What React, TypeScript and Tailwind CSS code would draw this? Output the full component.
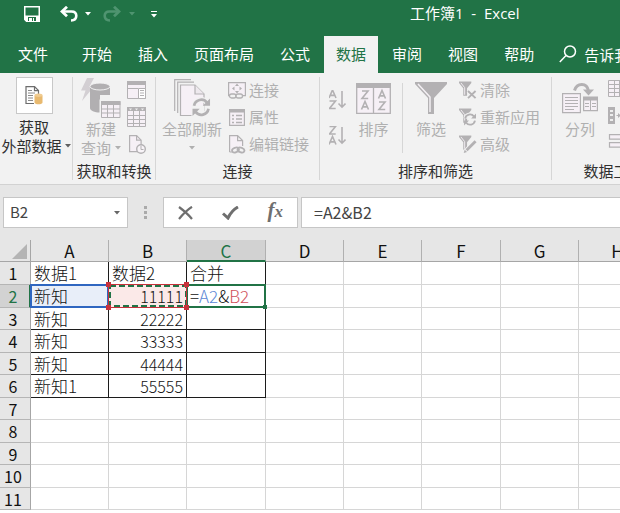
import React from 'react';

type IconProps = { className?: string };

const G = '#b3b1b3';
const PALE = '#f6f0f6';

function SaveIcon() {
  return (
    <svg width="16" height="16" viewBox="0 0 16 16" fill="none" aria-hidden="true">
      <path d="M.75.75h14.5v14.5H2.5L.75 13.5z" stroke="#fff" strokeWidth="1.5" />
      <path d="M1 9.500h14V15H1z" fill="#fff" />
      <path d="M4 11h8v4H4z" fill="#217346" />
      <path d="M5 12h3v3H5zM9 12h1v3H9z" fill="#fff" />
    </svg>
  );
}

function UndoIcon({ className }: IconProps) {
  return (
    <svg width="18" height="16" viewBox="0 0 18 16" fill="none" className={className} aria-hidden="true">
      <path d="M2 5.500h9.500c3 0 4.800 1.800 4.800 4.300s-1.800 4.600-5.300 4.700" stroke="currentColor" strokeWidth="2.600" />
      <path d="M7 .8 2 5.500l5 4.700" stroke="currentColor" strokeWidth="2.800" />
    </svg>
  );
}

function Caret({ className = '' }: IconProps) {
  return (
    <svg width="6" height="4" viewBox="0 0 6 4" className={className} aria-hidden="true">
      <path d="M0 0h6L3 3.500z" fill="currentColor" />
    </svg>
  );
}

function SearchIcon() {
  return (
    <svg width="18" height="18" viewBox="0 0 18 18" fill="none" stroke="#fff" strokeWidth="1.500" aria-hidden="true">
      <circle cx="11" cy="6.500" r="5.500" />
      <path d="M7 10.500.8 17" />
    </svg>
  );
}

function ExternalDataIcon() {
  return (
    <svg width="18" height="19" viewBox="0 0 18 19" fill="none" aria-hidden="true">
      <path d="M9 17.500H1V.6h8.500l4 4V8" stroke="#6d6d6d" strokeWidth="1.200" />
      <path d="M9.500.6v4h4" stroke="#6d6d6d" strokeWidth="1.200" />
      <path d="M3 4.500h4M3 7h7M3 9.500h5M3 12h5M3 14.500h5" stroke="#8a8a8a" />
      <path d="M9.500 9.500v7c0 1 1.800 1.800 4 1.800s4-.8 4-1.800v-7z" fill="#e8b96f" />
      <ellipse cx="13.500" cy="9.300" rx="4" ry="1.700" fill="#f0cb90" />
    </svg>
  );
}

function NewQueryIcon() {
  return (
    <svg width="40" height="40" viewBox="0 0 40 40" fill="none" aria-hidden="true">
      <path d="M6 0h7L8.500 8.500H13L1 23l3.500-10.500H0z" fill="#d3cfd3" />
      <path d="M9 8v22c0 2.600 4.400 4.500 10 4.500V17h10V8z" fill="#b1afb1" />
      <ellipse cx="19" cy="8.500" rx="10" ry="3.500" fill="#b1afb1" stroke="#f2f2f2" />
      <path d="M18.500 21.500h21v18.500h-21z" fill="#f2f2f2" />
      <path d="M20.500 23.500h18.500v16H20.500z" fill={PALE} stroke={G} />
      <path d="M20 23h19.500v4H20z" fill={G} />
      <path d="M20.500 31h18.500M20.500 35h18.500M26.500 27v12M32.500 27v12" stroke={G} />
    </svg>
  );
}

function ShowQueriesIcon() {
  return (
    <svg width="19" height="18" viewBox="0 0 19 18" fill="none" aria-hidden="true">
      <path d="M.5.5h18v17H.5z" fill={PALE} stroke={G} />
      <path d="M0 0h19v4H0z" fill={G} />
      <path d="M11.500 7.500h7v10h-7z" fill="#fff" stroke={G} />
      <path d="M13 9.500h4M13 12h4M13 14.500h4M1 7.500h10" stroke={G} />
    </svg>
  );
}

function FromTableIcon() {
  return (
    <svg width="19" height="20" viewBox="0 0 19 20" fill="none" aria-hidden="true">
      <path d="M.5.5h18v19H.5z" fill={PALE} stroke={G} />
      <path d="M0 0h19v4H0z" fill={G} />
      <path d="M1 8.500h17M1 12.500h17M1 16.500h17M6.500 4v15M12.500 4v15" stroke={G} />
      <path d="M2 1.500h3L3.500 3.500zM8 1.500h3L9.500 3.500zM14 1.500h3l-1.500 2z" fill="#eee" />
    </svg>
  );
}

function RecentIcon() {
  return (
    <svg width="19" height="20" viewBox="0 0 19 20" fill="none" aria-hidden="true">
      <path d="M2.600 .7h7l4.500 4.500v11.500H2.600z" fill={PALE} stroke={G} strokeWidth="1.200" />
      <path d="M9.600 .7v4.500h4.500" stroke={G} strokeWidth="1.200" />
      <circle cx="14" cy="14" r="4.300" fill="#f8f4f8" stroke={G} strokeWidth="1.400" />
      <path d="M14 11v3.500h2.500" stroke={G} />
    </svg>
  );
}

function RefreshArrows({ x, y, s }: { x: number; y: number; s: number }) {
  return (
    <g transform={`translate(${x} ${y}) scale(${s})`} fill="none">
      <path d="M2 7.500a7 7 0 0 1 12.500-3M16 10.500a7 7 0 0 1-12.500 3" stroke="#f2f2f2" strokeWidth="5" />
      <path d="M2 7.500a7 7 0 0 1 12.500-3M16 10.500a7 7 0 0 1-12.500 3" stroke={G} strokeWidth="2.600" />
      <path d="M17.500.5v7h-7zM.5 17.500v-7h7z" fill={G} />
    </g>
  );
}

function RefreshAllIcon() {
  return (
    <svg width="37" height="38" viewBox="0 0 37 38" fill="none" aria-hidden="true">
      <path d="M.7 32V.7H17M3.700 34V3.200H20" stroke={G} strokeWidth="1.200" />
      <path d="M6.500 36.500V6H21l9 9v21.500z" fill={PALE} stroke={G} strokeWidth="1.200" />
      <path d="M21 6v9h9" fill="#eee9ee" stroke={G} strokeWidth="1.200" />
      <path d="M17.500 26.500h13v12h-13z" fill="#f2f2f2" />
      <RefreshArrows x={18} y={19} s={1.030} />
    </svg>
  );
}

function ConnectionsIcon() {
  return (
    <svg width="18" height="17" viewBox="0 0 18 17" fill="none" aria-hidden="true">
      <path d="M.6.600h16.800v13H.6z" fill={PALE} stroke={G} strokeWidth="1.200" />
      <path d="M9 1.500l2 2.500H7zM9 11.500l2-2.500H7zM4 6.500l2.500-2v4zM14 6.500l-2.500-2v4z" fill={G} />
      <rect x="1.500" y="12" width="6.500" height="4" rx="2" fill="#f2f2f2" stroke={G} strokeWidth="1.300" />
      <rect x="8" y="12" width="6.500" height="4" rx="2" fill="#f2f2f2" stroke={G} strokeWidth="1.300" />
    </svg>
  );
}

function PropertiesIcon() {
  return (
    <svg width="16" height="17" viewBox="0 0 16 17" fill="none" aria-hidden="true">
      <path d="M.6.600h14.800v15.800H.6z" fill={PALE} stroke={G} strokeWidth="1.200" />
      <path d="M0 0h16v3.500H0z" fill={G} />
      <path d="M3 6.500h2M3 10h2M3 13.500h2M7 6.500h6M7 10h6M7 13.500h6" stroke={G} strokeWidth="1.300" />
    </svg>
  );
}

function EditLinksIcon() {
  return (
    <svg width="18" height="19" viewBox="0 0 18 19" fill="none" aria-hidden="true">
      <path d="M1.600 17V.6h8l5 5V11M9.600.6v5h5M1.600 17H4" fill={PALE} stroke={G} strokeWidth="1.200" />
      <ellipse cx="7.500" cy="15" rx="3.500" ry="2.300" transform="rotate(-20 7.500 15)" stroke={G} strokeWidth="1.800" />
      <ellipse cx="13" cy="15" rx="3.500" ry="2.300" transform="rotate(20 13 15)" stroke={G} strokeWidth="1.800" />
    </svg>
  );
}

const A = (x: number, y: number) => <path d={`M${x} ${y + 8}l3.500-8 3.500 8M${x + 1.2} ${y + 5.4}h4.600`} />;
const Z = (x: number, y: number) => <path d={`M${x + .5} ${y + .5}h6l-6 7.500h6.200`} />;

function SortIcon({ down }: { down?: boolean }) {
  return (
    <svg width="17" height="20" viewBox="0 0 17 20" fill="none" stroke={G} strokeWidth="1.600" aria-hidden="true">
      {down ? Z(0, 0) : A(0, 0)}
      {down ? A(0, 10.500) : Z(0, 10.500)}
      <path d="M13 1v16M9.500 13.500l3.500 3.700 3.500-3.700" />
    </svg>
  );
}

function SortDialogIcon() {
  return (
    <svg width="35" height="31" viewBox="0 0 35 31" fill="none" stroke={G} strokeWidth="1.600" aria-hidden="true">
      <path d="M.7.7h33.600v29.600H.7zM17.500 4v26" fill={PALE} strokeWidth="1.300" />
      <path d="M0 0h35v5H0z" fill={G} stroke="none" />
      {Z(5.500, 7.500)}
      {A(5.500, 18.500)}
      {A(22.500, 7.500)}
      {Z(22.500, 18.500)}
    </svg>
  );
}

function FunnelIcon() {
  return (
    <svg width="32" height="32" viewBox="0 0 32 32" fill="none" aria-hidden="true">
      <path d="M0 0h32v2L19 16v16h-6V16L0 2z" fill={G} />
      <path d="M3 2l12 13v15" stroke="#f4f0f4" strokeWidth="1.500" />
    </svg>
  );
}

function FilterIcon({ kind }: { kind: 'clear' | 'reapply' | 'advanced' }) {
  return (
    <svg width="19" height="19" viewBox="0 0 19 19" fill="none" aria-hidden="true">
      <path d="M0 0h13v1.500L8.500 7v8h-4V7L0 1.500z" fill={G} />
      <path d="M2 1.500 6 6.500V14" stroke="#f4f0f4" />
      {kind === 'clear' && (
        <>
          <path d="M9.500 10l8 7.500M17.500 10l-8 7.500" stroke="#f2f2f2" strokeWidth="4" />
          <path d="M9.500 10l8 7.500M17.500 10l-8 7.500" stroke={G} strokeWidth="2" />
        </>
      )}
      {kind === 'reapply' && <RefreshArrows x={5} y={5} s={.740} />}
      {kind === 'advanced' && (
        <>
          <path d="M6 17.500 17.500 6" stroke="#f2f2f2" strokeWidth="5" />
          <path d="M8 15.500 17.500 6" stroke={G} strokeWidth="3" />
          <path d="M5 18.500l1-3.500 2.500 2.500z" fill={G} />
        </>
      )}
    </svg>
  );
}

function TextToColumnsIcon() {
  return (
    <svg width="36" height="32" viewBox="0 0 36 32" fill="none" aria-hidden="true">
      <path d="M12.500 8.500C15 .5 25 .5 26.500 9" stroke={G} strokeWidth="3" />
      <path d="M21 7.500h11L26.500 13.500z" fill={G} />
      <path d="M.6 11.600h17.800v19H.6z" fill={PALE} stroke={G} strokeWidth="1.200" />
      <path d="M3 15.500h13M3 18.500h13M3 21.500h13M3 24.500h13M3 27.500h9" stroke={G} />
      <path d="M21.600 15.600h13.800v13H21.600z" fill={PALE} stroke={G} strokeWidth="1.200" />
      <path d="M21 14.500h15v4H21z" fill={G} />
      <path d="M28.500 16v12M23 21.500h4M23 24.500h4M30 21.500h4M30 24.500h4" stroke={G} />
    </svg>
  );
}

function FlashFillIcon() {
  return (
    <svg width="19" height="17" viewBox="0 0 19 17" fill="none" aria-hidden="true">
      <path d="M.5.5h18v16H.5zM.5 4.500h18M.5 8.500h18M.5 12.500h18M6.500.5v16M11.500.5v16" fill={PALE} stroke={G} />
    </svg>
  );
}

function RemoveDuplicatesIcon() {
  return (
    <svg width="19" height="17" viewBox="0 0 19 17" fill="none" aria-hidden="true">
      <path d="M0 0h7v17H0z" fill={G} />
      <path d="M2 3h3v2H2zM2 7h3v2H2zM2 12h3v2H2z" fill="#eee" />
      <path d="M8.500 8.500H14" stroke={G} />
      <path d="M10 6l3 2.500-3 2.500z" fill={G} />
    </svg>
  );
}

function ValidationIcon() {
  return (
    <svg width="19" height="14" viewBox="0 0 19 14" fill="none" aria-hidden="true">
      <path d="M1.500.6h16v4.500h-16zM1.500 8.600h16v4.500h-16z" fill={PALE} stroke={G} strokeWidth="1.200" />
    </svg>
  );
}

function Tab({ label, active = false }: { label: string; active?: boolean }) {
  return (
    <button
      type="button"
      role="tab"
      aria-selected={active}
      className={
        active
          ? 'h-full shrink-0 bg-[#f2f2f2] px-3 pb-[3px] text-[#217346]'
          : 'h-full shrink-0 px-3 pb-[3px] text-white'
      }
    >
      {label}
    </button>
  );
}

function Group({ title, className, children }: { title: string; className: string; children: React.ReactNode }) {
  return (
    <section aria-label={title} className={`flex shrink-0 flex-col border-r border-[#d6d6d6] ${className}`}>
      <div className="flex h-[86px]">{children}</div>
      <h2 className="text-center text-[#303030]">{title}</h2>
    </section>
  );
}

function BigButton({ icon, label, second, caret, className = '' }: {
  icon: React.ReactNode; label: string; second?: string; caret?: boolean; className?: string;
}) {
  return (
    <button type="button" className={`flex shrink-0 flex-col items-center text-[#b0b0b0] ${className}`}>
      <span className="flex h-[42px] items-center">{icon}</span>
      <span>{label}</span>
      {(second || caret) && (
        <span className="flex h-[19px] items-center gap-1">
          {second}
          <Caret />
        </span>
      )}
    </button>
  );
}

function SmallButton({ icon, label }: { icon: React.ReactNode; label: string }) {
  return (
    <button type="button" className="flex h-[27px] items-center gap-[3px] text-[#b0b0b0]">
      <span className="flex w-[18px] justify-center">{icon}</span>
      <span className="pb-[2px]">{label}</span>
    </button>
  );
}

const columns = ['A', 'B', 'C', 'D', 'E', 'F', 'G', 'H'];
const data: string[][] = [
  ['数据1', '数据2', '合并'],
  ['新知', '11111', ''],
  ['新知', '22222', ''],
  ['新知', '33333', ''],
  ['新知', '44444', ''],
  ['新知1', '55555', ''],
  [], [], [], [], [],
];

function Handles() {
  return (
    <>
      <span className="absolute -left-[3px] -top-[3px] size-[5px] bg-[#c8323c]" />
      <span className="absolute -right-[3px] -top-[3px] size-[5px] bg-[#c8323c]" />
      <span className="absolute -bottom-[3px] -left-[3px] size-[5px] bg-[#c8323c]" />
      <span className="absolute -bottom-[3px] -right-[3px] size-[5px] bg-[#c8323c]" />
    </>
  );
}

function Cell({ row, col }: { row: number; col: number }) {
  const value = data[row][col] ?? '';
  const boxed = row < 6 && col < 3;
  const border = boxed ? 'border-[#1c1c1c]' : 'border-[#d6d6d6]';
  const align = col === 1 && row > 0 ? 'pr-[3px] text-right text-[16px]' : 'pl-[3px] text-left';
  return (
    <td className={`relative whitespace-nowrap border-b border-r py-0 leading-5 ${border} ${align}`}>
      {row === 1 && col === 0 && (
        <span className="absolute -inset-px border-2 border-[#2f66c0] bg-[#e8eef9]" />
      )}
      {row === 1 && col === 1 && (
        <span className="absolute -inset-px z-10 border border-[#c8323c] bg-[#fbe9e8]">
          <svg className="absolute inset-0 size-full" aria-hidden="true">
            <rect x="1" y="1" width="76" height="20" fill="none" stroke="#217346" strokeWidth="2" strokeDasharray="6 3" />
          </svg>
          <Handles />
        </span>
      )}
      {row === 1 && col === 2 ? (
        <>
          <span className="absolute -inset-px border-2 border-[#217346] bg-white" />
          <span className="absolute -bottom-[2px] -right-[2px] z-10 size-1 bg-[#217346]" />
          <span className="relative">
            =<span className="text-[#5b87d6]">A2</span>&amp;<span className="text-[#d0505a]">B2</span>
          </span>
        </>
      ) : (
        <span className="relative z-20">{value}</span>
      )}
    </td>
  );
}

export default function App() {
  return (
    <div className="h-screen overflow-hidden bg-white font-['Noto_Sans_CJK_SC',sans-serif] text-[15px] leading-[19px]">
      <header className="bg-[#217346] text-white">
        <div className="flex h-9 items-start">
          <div className="flex w-[410px] shrink-0 items-center pl-6 pt-[6px]">
            <button type="button" aria-label="保存"><SaveIcon /></button>
            <button type="button" aria-label="撤消" className="ml-5 flex items-center gap-[7px]">
              <UndoIcon />
              <Caret />
            </button>
            <button type="button" aria-label="恢复" className="ml-3 flex items-center gap-2 text-[#4f9470]">
              <UndoIcon className="-scale-x-100" />
              <Caret />
            </button>
            <button type="button" aria-label="自定义快速访问工具栏" className="ml-4 flex flex-col items-center gap-[2px]">
              <span className="h-px w-[6px] bg-white" />
              <Caret />
            </button>
          </div>
          <h1 className="shrink-0 whitespace-pre pt-1 font-['Open_Sans','Noto_Sans_CJK_SC',sans-serif]">工作簿1  -  Excel</h1>
        </div>
        <nav role="tablist" className="flex h-[37px] gap-[2px] overflow-hidden whitespace-nowrap pl-[6px]">
          <Tab label="文件" />
          <span className="w-[6px] shrink-0" />
          <Tab label="开始" />
          <Tab label="插入" />
          <Tab label="页面布局" />
          <Tab label="公式" />
          <Tab label="数据" active />
          <Tab label="审阅" />
          <Tab label="视图" />
          <Tab label="帮助" />
          <button type="button" className="flex h-full shrink-0 items-center gap-[7px] pb-px pl-[11px]">
            <SearchIcon />
            告诉我
          </button>
        </nav>
      </header>

      <main>
        <div className="flex h-[112px] overflow-hidden whitespace-nowrap border-b border-[#d2d2d2] bg-[#f2f2f2] pb-1 pt-1">
          <section className="flex w-[73px] shrink-0 border-r border-[#d6d6d6]">
            <button type="button" className="flex w-full flex-col items-center text-[#303030]">
              <span className="mr-1 flex size-[37px] items-center justify-center border border-[#c8c8c8] bg-white">
                <ExternalDataIcon />
              </span>
              <span className="mr-1 mt-[3px]">获取</span>
              <span className="flex items-center gap-[3px]">外部数据<Caret className="text-[#606060]" /></span>
            </button>
          </section>

          <Group title="获取和转换" className="w-[83px]">
            <BigButton icon={<NewQueryIcon />} label="新建" second="查询" caret className="ml-2" />
            <div className="ml-[6px] flex flex-col gap-2 pt-1">
              <button type="button" aria-label="显示查询"><ShowQueriesIcon /></button>
              <button type="button" aria-label="从表格"><FromTableIcon /></button>
              <button type="button" aria-label="最近使用的源"><RecentIcon /></button>
            </div>
          </Group>

          <Group title="连接" className="w-[164px]">
            <BigButton icon={<RefreshAllIcon />} label="全部刷新" caret className="ml-[6px]" />
            <div className="ml-[6px] flex flex-col">
              <SmallButton icon={<ConnectionsIcon />} label="连接" />
              <SmallButton icon={<PropertiesIcon />} label="属性" />
              <SmallButton icon={<EditLinksIcon />} label="编辑链接" />
            </div>
          </Group>

          <Group title="排序和筛选" className="w-[232px]">
            <div className="ml-[9px] flex flex-col gap-4 pt-[13px]">
              <button type="button" aria-label="升序"><SortIcon /></button>
              <button type="button" aria-label="降序"><SortIcon down /></button>
            </div>
            <BigButton icon={<SortDialogIcon />} label="排序" className="ml-[10px]" />
            <div className="ml-[11px] mt-[6px] h-[70px] border-r border-[#d6d6d6]" />
            <BigButton icon={<FunnelIcon />} label="筛选" className="ml-3" />
            <div className="ml-3 flex flex-col">
              <SmallButton icon={<FilterIcon kind="clear" />} label="清除" />
              <SmallButton icon={<FilterIcon kind="reapply" />} label="重新应用" />
              <SmallButton icon={<FilterIcon kind="advanced" />} label="高级" />
            </div>
          </Group>

          <Group title="数据工具" className="w-[124px]">
            <BigButton icon={<TextToColumnsIcon />} label="分列" className="ml-[10px]" />
            <div className="ml-[10px] flex flex-col gap-[10px] pt-[3px]">
              <button type="button" aria-label="快速填充"><FlashFillIcon /></button>
              <button type="button" aria-label="删除重复值"><RemoveDuplicatesIcon /></button>
              <button type="button" aria-label="数据验证"><ValidationIcon /></button>
            </div>
          </Group>
        </div>

        <div className="flex h-[55px] items-center bg-[#e6e6e6] pl-[3px] text-[#444]">
          <div className="flex h-[31px] w-[125px] shrink-0 items-center border border-[#c6c6c6] bg-white pr-[7px]">
            <input aria-label="名称框" defaultValue="B2" className="min-w-0 flex-1 bg-transparent pb-[2px] pl-[6px] outline-none" />
            <button type="button" aria-label="名称列表" className="text-[#666]"><Caret /></button>
          </div>
          <div className="ml-4 flex w-[3px] shrink-0 flex-col gap-[2px]">
            <span className="size-[3px] bg-[#aaa]" />
            <span className="size-[3px] bg-[#aaa]" />
            <span className="size-[3px] bg-[#aaa]" />
          </div>
          <div className="ml-4 flex h-[31px] w-[135px] shrink-0 items-center justify-between border border-[#c6c6c6] bg-white px-[14px] text-[#6f6f6f]">
            <button type="button" aria-label="取消">
              <svg width="15" height="14" viewBox="0 0 15 14" fill="none" stroke="currentColor" strokeWidth="2.200" aria-hidden="true">
                <path d="M1 1c4 3 9 7 13 12M14 .8C9 4 5 8 1 13" />
              </svg>
            </button>
            <button type="button" aria-label="输入">
              <svg width="17" height="14" viewBox="0 0 17 14" fill="none" stroke="currentColor" strokeWidth="3" aria-hidden="true">
                <path d="M1 7.500 6 12C8 8 12 3 16 1" />
              </svg>
            </button>
            <button type="button" aria-label="插入函数" className="pb-[3px] font-['Liberation_Serif',serif] text-[21px] font-bold italic">
              f<span className="text-[17px]">x</span>
            </button>
          </div>
          <input
            aria-label="编辑栏"
            defaultValue="=A2&B2"
            className="ml-[3px] h-[31px] min-w-0 flex-1 border border-r-0 border-[#c6c6c6] bg-white pb-[2px] pl-3 text-[16px] outline-none"
          />
        </div>

        <div className="overflow-hidden">
          <table className="w-[657px] table-fixed border-separate border-spacing-0 text-[17px] font-light text-[#111]">
            <colgroup>
              <col className="w-[31px]" />
              <col className="w-[78px]" />
              <col className="w-[78px]" />
              <col className="w-[79px]" />
              <col className="w-[78px]" />
              <col className="w-[78px]" />
              <col className="w-[79px]" />
              <col className="w-[78px]" />
              <col className="w-[78px]" />
            </colgroup>
            <thead>
              <tr className="h-[22px] bg-[#e6e6e6]">
                <th aria-label="全选" className="border-b border-r border-[#a6a6a6] p-0 align-bottom">
                  <svg width="15" height="15" viewBox="0 0 15 15" className="mb-[2px] ml-3" aria-hidden="true">
                    <path d="M15 0v15H0z" fill="#b4b4b4" />
                  </svg>
                </th>
                {columns.map((c) => (
                  <th
                    key={c}
                    scope="col"
                    className={
                      c === 'C'
                        ? 'border-b-2 border-r border-b-[#217346] border-r-[#b0b0b0] bg-[#d2d2d2] p-0 font-normal leading-[19px] text-[#217346]'
                        : 'border-b border-r border-b-[#a6a6a6] border-r-[#b0b0b0] p-0 font-normal leading-5'
                    }
                  >
                    {c}
                  </th>
                ))}
              </tr>
            </thead>
            <tbody>
              {data.map((_, r) => (
                <tr key={r} className={r === 0 || r % 2 === 1 ? 'h-[23px]' : 'h-[22px]'}>
                  <th
                    scope="row"
                    className={
                      r === 1
                        ? 'border-b border-r-2 border-b-[#b5b5b5] border-r-[#217346] bg-[#d2d2d2] p-0 pr-[3px] text-[16px] font-normal leading-5 text-[#217346]'
                        : 'border-b border-r border-b-[#b5b5b5] border-r-[#a6a6a6] bg-[#e6e6e6] p-0 pr-1 text-[16px] font-normal leading-5'
                    }
                  >
                    {r + 1}
                  </th>
                  {columns.map((c, i) => <Cell key={c} row={r} col={i} />)}
                </tr>
              ))}
            </tbody>
          </table>
        </div>
      </main>
    </div>
  );
}
